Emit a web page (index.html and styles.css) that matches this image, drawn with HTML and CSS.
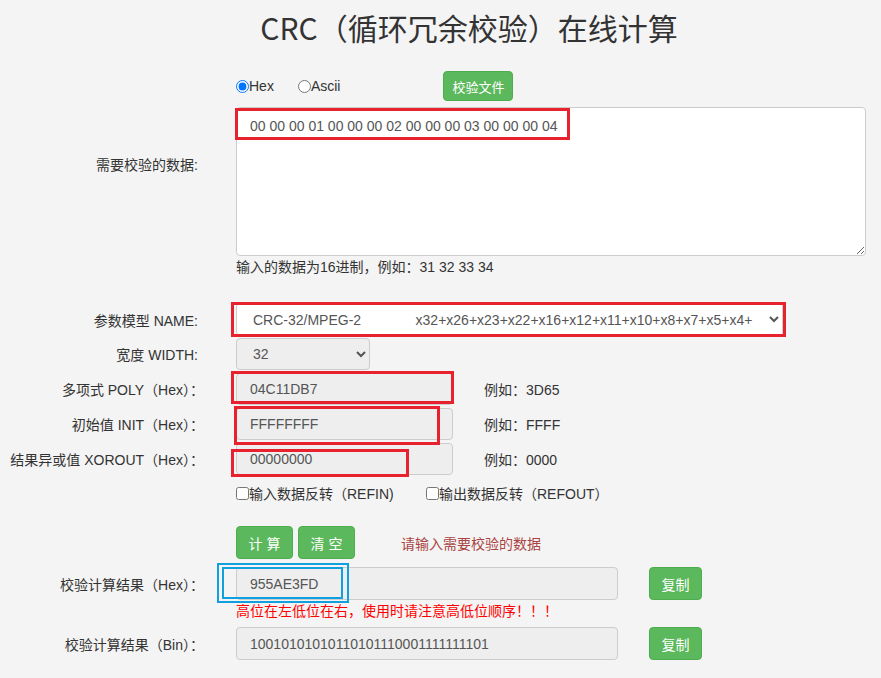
FILE: index.html
```html
<!DOCTYPE html>
<html lang="zh-CN">
<head>
<meta charset="utf-8">
<title>CRC（循环冗余校验）在线计算</title>
<link rel="stylesheet" href="styles.css">
</head>
<body>
<div class="page">
  <h1 class="title">CRC（循环冗余校验）在线计算</h1>

  <div class="row row-data">
    <label class="label">需要校验的数据:</label>
    <div class="ctrl">
      <div class="radio-line">
        <label class="radio radio-hex"><input type="radio" name="type" checked>Hex</label>
        <label class="radio"><input type="radio" name="type">Ascii</label>
        <button class="btn btn-file">校验文件</button>
      </div>
      <textarea class="data">00 00 00 01 00 00 00 02 00 00 00 03 00 00 00 04</textarea>
    </div>
  </div>
  <div class="help">输入的数据为16进制，例如：31 32 33 34</div>

  <div class="row row-name">
    <label class="label">参数模型 NAME:</label>
    <select class="sel sel-name">
      <option>CRC-32/MPEG-2&nbsp;&nbsp;&nbsp;&nbsp;&nbsp;&nbsp;&nbsp;&nbsp;&nbsp;&nbsp;&nbsp;&nbsp;&nbsp;&nbsp;x32+x26+x23+x22+x16+x12+x11+x10+x8+x7+x5+x4+</option>
    </select>
  </div>
  <div class="row row-width">
    <label class="label">宽度 WIDTH:</label>
    <select class="sel sel-width" disabled>
      <option>32</option>
    </select>
  </div>
  <div class="row row-field">
    <label class="label label-fw">多项式 POLY（Hex）：</label>
    <input class="inp inp-short" type="text" value="04C11DB7" readonly>
    <span class="eg">例如：3D65</span>
  </div>
  <div class="row row-field">
    <label class="label label-fw">初始值 INIT（Hex）：</label>
    <input class="inp inp-short" type="text" value="FFFFFFFF" readonly>
    <span class="eg">例如：FFFF</span>
  </div>
  <div class="row row-field">
    <label class="label label-fw">结果异或值 XOROUT（Hex）：</label>
    <input class="inp inp-short" type="text" value="00000000" readonly>
    <span class="eg">例如：0000</span>
  </div>

  <div class="row row-check">
    <div class="ctrl checks">
      <label class="check check-in"><input type="checkbox">输入数据反转（REFIN)</label>
      <label class="check"><input type="checkbox">输出数据反转（REFOUT）</label>
    </div>
  </div>

  <div class="row row-btns">
    <div class="ctrl btns">
      <button class="btn btn-act">计 算</button>
      <button class="btn btn-act">清 空</button>
      <span class="tip">请输入需要校验的数据</span>
    </div>
  </div>

  <div class="row row-res">
    <label class="label label-fw">校验计算结果（Hex）：</label>
    <input class="inp inp-long" type="text" value="955AE3FD" readonly>
    <button class="btn btn-copy">复制</button>
  </div>
  <div class="warn">高位在左低位在右，使用时请注意高低位顺序！！！</div>
  <div class="row row-res row-bin">
    <label class="label label-fw">校验计算结果（Bin）：</label>
    <input class="inp inp-long" type="text" value="10010101010110101110001111111101" readonly>
    <button class="btn btn-copy">复制</button>
  </div>

  <div class="mark mark-data"></div>
  <div class="mark mark-name"></div>
  <div class="mark mark-poly"></div>
  <div class="mark mark-init"></div>
  <div class="mark mark-xor"></div>
  <div class="mark-blue mark-blue-out"></div>
  <div class="mark-blue mark-blue-in"></div>
</div>
</body>
</html>
```
FILE: styles.css
```css
html, body {
  margin: 0;
  padding: 0;
  background: #f4f4f4;
}
body {
  font-family: "Liberation Sans", "Noto Sans CJK SC", sans-serif;
  font-size: 14px;
  color: #333;
}
.page {
  position: relative;
  width: 881px;
  height: 678px;
  overflow: hidden;
}
.title {
  margin: 0;
  padding-top: 6px;
  padding-left: 57px;
  height: 42px;
  line-height: 42px;
  margin-bottom: 23px;
  text-align: center;
  font-family: "Noto Sans CJK SC", sans-serif;
  font-weight: 400;
  font-size: 30px;
  color: #333;
}
.row {
  display: flex;
  align-items: center;
}
.label {
  width: 198px;
  flex: none;
  text-align: right;
  margin-right: 38px;
  white-space: nowrap;
}
.label-fw {
  width: 204px;
  margin-right: 32px;
}
.ctrl {
  display: flex;
  flex-direction: column;
}
.row-data .ctrl {
  width: 630px;
}
.radio-line {
  display: flex;
  align-items: center;
  height: 30px;
  margin-bottom: 6px;
}
.radio {
  display: flex;
  align-items: center;
  color: #333;
}
.radio input {
  margin: 0;
  width: 13px;
  height: 13px;
}
.radio-hex {
  margin-right: 24px;
}
.btn {
  font-family: "Liberation Sans", "Noto Sans CJK SC", sans-serif;
  background: #5cb85c;
  border: 1px solid #4cae4c;
  border-radius: 4px;
  color: #fff;
  padding: 0;
  cursor: pointer;
}
.btn-file {
  margin-left: 103px;
  width: 70px;
  height: 30px;
  font-size: 13px;
}
.data {
  box-sizing: border-box;
  width: 630px;
  height: 149px;
  margin: 0;
  padding: 8px 13px;
  border: 1px solid #ccc;
  border-radius: 4px;
  background: #fff;
  font-family: "Liberation Sans", "Noto Sans CJK SC", sans-serif;
  font-size: 14px;
  line-height: 20px;
  color: #555;
  resize: vertical;
}
.help {
  margin: 1px 0 0 236px;
  height: 20px;
  line-height: 20px;
  color: #333;
}
.sel {
  box-sizing: border-box;
  font-family: "Liberation Sans", "Noto Sans CJK SC", sans-serif;
  font-size: 14px;
  color: #555;
  border: 1px solid #ccc;
  border-radius: 4px;
  padding: 0 8px 0 12px;
  margin: 0;
}
.row-name {
  margin-top: 26px;
  height: 33px;
}
.sel-name {
  width: 547px;
  height: 33px;
  background: #fff;
}
.row-width {
  margin-top: 2px;
  height: 32px;
}
.sel-width {
  width: 134px;
  height: 32px;
  background: #eee;
  color: #555;
  opacity: 1;
}
.row-field {
  margin-top: 3px;
  height: 32px;
}
.inp {
  box-sizing: border-box;
  height: 32px;
  margin: 0;
  padding: 0 13px;
  border: 1px solid #ccc;
  border-radius: 4px;
  background: #eee;
  font-family: "Liberation Sans", "Noto Sans CJK SC", sans-serif;
  font-size: 14px;
  color: #555;
  outline: none;
}
.inp-short {
  width: 217px;
}
.eg {
  margin-left: 31px;
  color: #333;
}
.row-check {
  margin-top: 3px;
  height: 30px;
  padding-left: 236px;
}
.checks {
  flex-direction: row;
  align-items: center;
}
.check {
  display: flex;
  align-items: center;
  color: #333;
}
.check input {
  margin: 0;
  width: 13px;
  height: 13px;
}
.check-in {
  width: 190px;
}
.row-btns {
  margin-top: 18px;
  height: 33px;
  padding-left: 236px;
}
.btns {
  flex-direction: row;
  align-items: center;
}
.btn-act {
  width: 57px;
  height: 33px;
  font-size: 14px;
  margin-right: 5px;
}
.tip {
  margin-left: 41px;
  color: #a94442;
}
.row-res {
  margin-top: 8px;
  height: 33px;
}
.inp-long {
  width: 382px;
  height: 33px;
}
.btn-copy {
  margin-left: 31px;
  width: 53px;
  height: 33px;
  font-size: 14px;
}
.warn {
  margin: 1px 0 0 236px;
  height: 20px;
  line-height: 20px;
  color: #f00;
}
.row-bin {
  margin-top: 6px;
}

/* annotation overlays */
.mark {
  position: absolute;
  box-sizing: border-box;
  border: 3px solid #e8212e;
  pointer-events: none;
}
.mark-data { left: 235px; top: 108px; width: 335px; height: 32px; }
.mark-name { left: 231px; top: 302px; width: 555px; height: 35px; }
.mark-poly { left: 231px; top: 371px; width: 223px; height: 33px; }
.mark-init { left: 234px; top: 406px; width: 206px; height: 39px; }
.mark-xor { left: 231px; top: 449px; width: 178px; height: 28px; }
.mark-blue {
  position: absolute;
  box-sizing: border-box;
  border: 2px solid #10a0e0;
  pointer-events: none;
}
.mark-blue-out { left: 217px; top: 563px; width: 132px; height: 40px; }
.mark-blue-in { left: 222px; top: 567px; width: 121px; height: 32px; }
```
